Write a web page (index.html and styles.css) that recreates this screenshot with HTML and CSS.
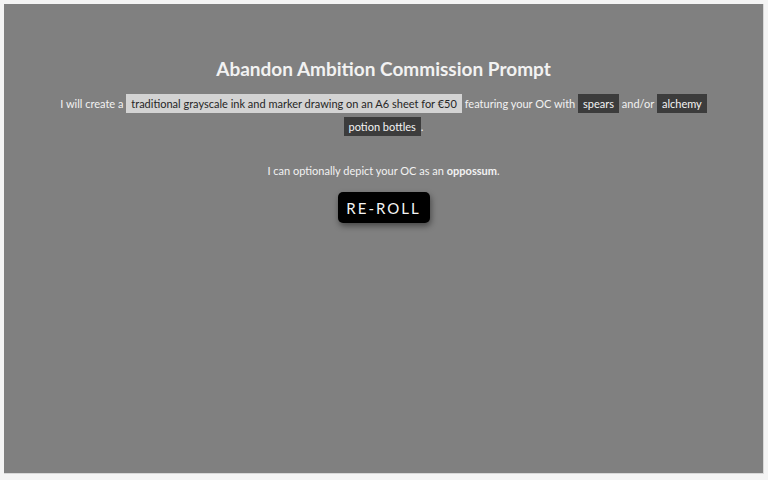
FILE: index.html
```html
<!DOCTYPE html>
<html>
<head>
    <title>Abandon Ambition Commission Prompt</title>
    <link rel="stylesheet" href="styles.css">
</head>
<body>
<div class="panel">
    <h1 class="title">Abandon Ambition Commission Prompt</h1>

    <p class="prompt">
        I will create a <span class="tag light">traditional grayscale ink and marker drawing on an A6 sheet for €50</span>
        featuring your OC with <span class="tag dark">spears</span> and/or <span class="tag dark">alchemy</span>
        <span class="tag dark">potion bottles</span>.
    </p>

    <p class="extra">I can optionally depict your OC as an <b>oppossum</b>.</p>

    <button type="button" class="reroll">RE-ROLL</button>
</div>
</body>
</html>
```

FILE: styles.css
```css
body {
    margin: 4px;
    background-color: #f4f4f4;
    font-family: Lato, "Open Sans", sans-serif;
}

.panel {
    height: 470px;
    background-color: #808080;
    border-right: 1px solid #d8d8d8;
    border-bottom: 1px solid #d8d8d8;
    text-align: center;
    color: #f2f2f2;
    padding-top: 1px;
    box-sizing: border-box;
}

.title {
    font-size: 19px;
    font-weight: 700;
    margin: 52px 0 12px;
}

.prompt {
    font-size: 11px;
    line-height: 23px;
    max-width: 664px;
    margin: 0 auto;
}

.tag {
    display: inline-block;
    line-height: 19px;
    padding: 0 5px;
}

.light {
    background-color: #d3d3d3;
    color: #262626;
}

.dark {
    background-color: #3c3c3c;
    color: #f4f4f4;
}

.extra {
    font-size: 11px;
    margin: 26px 0 15px;
}

.reroll {
    background-color: #000;
    color: #f4f4f4;
    border: none;
    border-radius: 5px;
    font-family: Lato, "Open Sans", sans-serif;
    font-size: 15px;
    letter-spacing: 2px;
    width: 92px;
    height: 31px;
    box-shadow: 1px 3px 6px rgba(0, 0, 0, 0.45);
}
```
